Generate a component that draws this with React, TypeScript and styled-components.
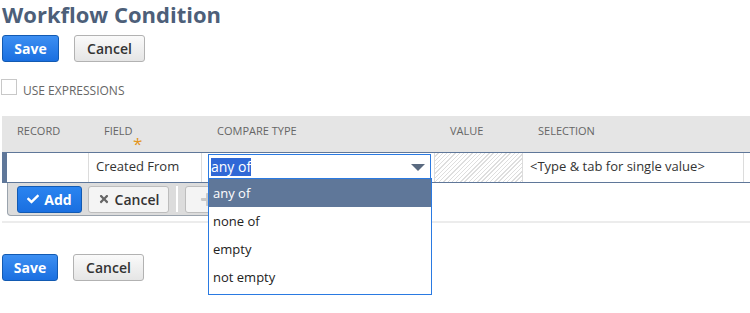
import styled, { createGlobalStyle } from 'styled-components';
import { FaCheck, FaTimes, FaPlus } from 'react-icons/fa';

const GlobalStyle = createGlobalStyle`
  body {
    margin: 0;
    background: #fff;
    font-family: 'Open Sans', 'Liberation Sans', sans-serif;
    color: #333;
  }
`;

const Page = styled.div`
  padding: 0 0 0 2px;
  width: 748px;
  height: 313px;
  overflow: hidden;
`;

const Title = styled.h1`
  margin: 0;
  font-size: 22px;
  line-height: 28px;
  font-weight: 700;
  color: #4d5f79;
`;

const ButtonRow = styled.div<{ $top: number }>`
  display: flex;
  gap: 15px;
  margin-top: ${(p) => p.$top}px;
`;

const Button = styled.button<{ $primary?: boolean; $w: number }>`
  width: ${(p) => p.$w}px;
  height: 27px;
  padding: 0;
  border-radius: 3px;
  font-family: inherit;
  font-size: 14px;
  font-weight: ${(p) => (p.$primary ? 700 : 600)};
  display: flex;
  align-items: center;
  justify-content: center;
  gap: 5px;
  cursor: pointer;
  color: ${(p) => (p.$primary ? '#fff' : '#333')};
  border: 1px solid ${(p) => (p.$primary ? '#125ab2' : '#b2b2b2')};
  background: ${(p) =>
    p.$primary
      ? 'linear-gradient(#3d8ff2, #1a6fe0)'
      : 'linear-gradient(#fafafa, #e5e5e5)'};

  svg {
    font-size: 12px;
  }
`;

const CheckRow = styled.label`
  display: flex;
  align-items: flex-end;
  gap: 6px;
  margin-top: 17px;
  height: 16px;
  font-size: 12px;
  color: #666;
`;

const Box = styled.span`
  width: 14px;
  height: 14px;
  border: 1px solid #c8c8c8;
  margin-left: -1px;
  flex: none;
`;

const CheckText = styled.span`
  line-height: 12px;
  margin-bottom: -2px;
`;

const Machine = styled.div`
  margin-top: 21px;
  position: relative;
  border-bottom: 2px solid #ececec;
  padding-bottom: 5px;
`;

const headCols = '87px 113px 233px 88px 221px 1fr';
const rowCols = '82px 113px 233px 88px 221px 1fr';

const Header = styled.div`
  display: grid;
  grid-template-columns: ${headCols};
  height: 36px;
  background: #e5e5e5;
`;

const HeadCell = styled.div`
  position: relative;
  padding: 7px 0 0 15px;
  font-size: 11px;
  text-transform: uppercase;
  color: #666;
`;

const Required = styled.span`
  position: absolute;
  left: 44px;
  top: 19px;
  color: #e3951c;
  font-size: 17px;
  line-height: 17px;
`;

const EditRow = styled.div`
  display: grid;
  grid-template-columns: ${rowCols};
  height: 29px;
  border-top: 1px solid #5f7799;
  border-bottom: 1px solid #5f7799;
  border-left: 5px solid #5f7799;
`;

const Cell = styled.div<{ $hatch?: boolean }>`
  border-right: 1px solid #dcdcdc;
  font-size: 13px;
  line-height: 27px;
  padding-left: 7px;
  color: #333;
  position: relative;
  background: ${(p) =>
    p.$hatch
      ? 'repeating-linear-gradient(135deg, #fff 0 2px, #dedede 2px 3px)'
      : '#fff'};
`;

const Select = styled.div`
  position: absolute;
  left: 6px;
  top: 1px;
  width: 223px;
  height: 25px;
  border: 1px solid #2a7ae2;
  box-sizing: border-box;
  display: flex;
  align-items: center;
  padding-left: 2px;
  background: #fff;
`;

const Picked = styled.span`
  background: #2f68d6;
  color: #fff;
  font-size: 14px;
  line-height: 18px;
`;

const Arrow = styled.span`
  position: absolute;
  right: 5px;
  top: 9px;
  width: 0;
  height: 0;
  border-left: 7px solid transparent;
  border-right: 7px solid transparent;
  border-top: 7px solid #5a6a80;
`;

const Dropdown = styled.ul`
  position: absolute;
  left: 206px;
  top: 62px;
  width: 222px;
  margin: 0;
  padding: 0 0 3px;
  list-style: none;
  border: 1px solid #2a7ae2;
  background: #fff;
  z-index: 2;
`;

const Option = styled.li<{ $active?: boolean }>`
  height: 28px;
  line-height: 28px;
  padding-left: 4px;
  font-size: 13px;
  color: ${(p) => (p.$active ? '#fff' : '#222')};
  background: ${(p) => (p.$active ? '#5f7799' : '#fff')};
`;

const Bar = styled.div`
  display: inline-flex;
  align-items: center;
  gap: 6px;
  margin-left: 5px;
  height: 32px;
  padding: 0 4px 0 9px;
  background: #dcdcdc;
  border: 1px solid #9aa3ad;
  border-top: none;
  border-radius: 0 0 0 4px;
`;

const BarButton = styled(Button)<{ $disabled?: boolean }>`
  color: ${(p) => (p.$disabled ? '#c9c9c9' : p.$primary ? '#fff' : '#333')};
  border-color: ${(p) => (p.$primary ? '#125ab2' : '#bdbdbd')};
  background: ${(p) =>
    p.$primary ? 'linear-gradient(#2a84f0, #1a6fe0)' : '#f4f4f4'};

  svg {
    font-size: ${(p) => (p.$disabled ? 15 : 12)}px;
    color: ${(p) => (p.$disabled ? '#c9c9c9' : p.$primary ? '#fff' : '#666')};
  }
`;

const Divider = styled.span`
  width: 2px;
  height: 26px;
  background: #fff;
  margin: 0 1px;
`;

const headers = ['Record', 'Field', 'Compare Type', 'Value', 'Selection', ''];
const options = ['any of', 'none of', 'empty', 'not empty'];

const App = () => {
  return (
    <Page>
      <GlobalStyle />
      <Title>Workflow Condition</Title>
      <ButtonRow $top={7}>
        <Button $primary $w={57}>Save</Button>
        <Button $w={71}>Cancel</Button>
      </ButtonRow>
      <CheckRow>
        <Box />
        <CheckText>USE EXPRESSIONS</CheckText>
      </CheckRow>

      <Machine>
        <Header>
          {headers.map((h) => (
            <HeadCell key={h || 'end'}>
              {h}
              {h === 'Field' && <Required>*</Required>}
            </HeadCell>
          ))}
        </Header>
        <EditRow>
          <Cell />
          <Cell>Created From</Cell>
          <Cell>
            <Select>
              <Picked>any of</Picked>
              <Arrow />
            </Select>
          </Cell>
          <Cell $hatch />
          <Cell>&lt;Type &amp; tab for single value&gt;</Cell>
          <Cell />
        </EditRow>
        <Bar>
          <BarButton $primary $w={65}>
            <FaCheck /> Add
          </BarButton>
          <BarButton $w={81}>
            <FaTimes /> Cancel
          </BarButton>
          <Divider />
          <BarButton $disabled $w={44}>
            <FaPlus />
          </BarButton>
        </Bar>
        <Dropdown>
          {options.map((o, i) => (
            <Option key={o} $active={i === 0}>
              {o}
            </Option>
          ))}
        </Dropdown>
      </Machine>

      <ButtonRow $top={31}>
        <Button $primary $w={56}>Save</Button>
        <Button $w={71}>Cancel</Button>
      </ButtonRow>
    </Page>
  );
};

export default App;
